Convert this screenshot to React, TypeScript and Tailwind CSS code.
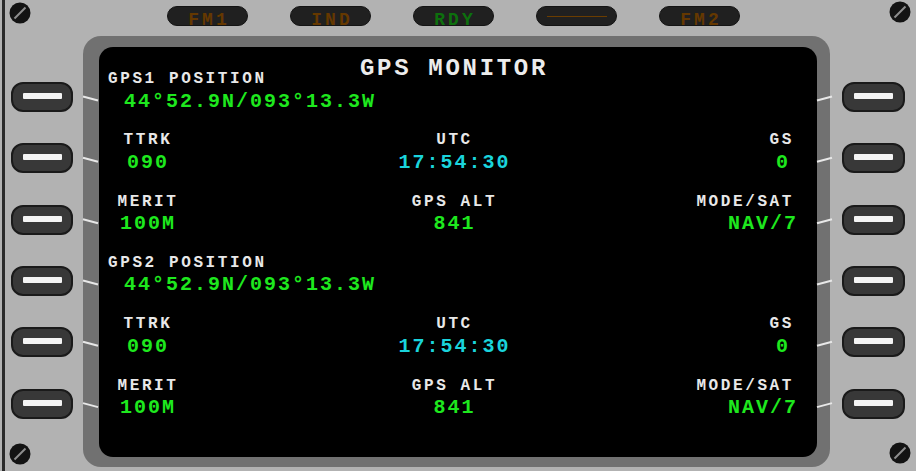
import React from "react";

const mono = "font-['Liberation_Mono',monospace] font-bold";

type Tri = {
  l: [string, string];
  m: [string, string];
  r: [string, string];
  rPad: string;
};

const tri1: Tri = {
  l: ["TTRK", "090"],
  m: ["UTC", "17:54:30"],
  r: ["GS", "0"],
  rPad: "pr-[27px]",
};
const tri2: Tri = {
  l: ["MERIT", "100M"],
  m: ["GPS ALT", "841"],
  r: ["MODE/SAT", "NAV/7"],
  rPad: "pr-[19px]",
};

const rows: ({ pos: string; value: string } | Tri)[] = [
  { pos: "GPS1 POSITION", value: "44°52.9N/093°13.3W" },
  tri1,
  tri2,
  { pos: "GPS2 POSITION", value: "44°52.9N/093°13.3W" },
  tri1,
  tri2,
];

// button centres, measured from the top of the bezel
const lskY = [0, 1, 2, 3, 4, 5].map((i) => 61 + i * 61.33);

function Screw() {
  return (
    <svg width="22" height="22" viewBox="0 0 22 22" className="shrink-0">
      <circle cx="11" cy="11" r="10.5" fill="#131313" />
      <line x1="5.5" y1="16.5" x2="16.5" y2="5.5" stroke="#8e8e8e" strokeWidth="2" />
    </svg>
  );
}

function Lsk() {
  return (
    <div className="h-[30px] rounded-[12px] border-2 border-[#1a1a1a] bg-[#383838] flex items-center justify-center">
      <div className="w-[39px] h-[6px] bg-[#f4f4f4] rounded-[1px] -mt-[2px]" />
    </div>
  );
}

function Pill({ text, color }: { text?: string; color: string }) {
  return (
    <div className="w-[81px] h-[20px] rounded-full bg-[#202020] border border-[#141414] flex justify-center pt-[4px]">
      {text ? (
        <span className={`${mono} text-[18px] leading-none tracking-[3px] pl-[3px] ${color}`}>
          {text}
        </span>
      ) : (
        <div className="w-[60px] h-px bg-[#6b3d00] mt-[5px]" />
      )}
    </div>
  );
}

export default function App() {
  return (
    <div className="w-[919px] h-[471px] bg-white flex overflow-hidden">
      <div className="w-[916px] h-full bg-[#b2b2b2] pl-[2px] flex">
        <div className="flex-1 flex border-l-[3px] border-[#2a2a2a]">
          {/* left keys */}
          <div className="w-[78px] flex flex-col">
            <div className="ml-[4px] mt-[2px]">
              <Screw />
            </div>
            <div className="ml-[6px] w-[62px] mt-[58px] flex flex-col gap-[31.33px]">
              {lskY.map((_, i) => (
                <Lsk key={i} />
              ))}
            </div>
            <div className="ml-[4px] mt-[24.33px]">
              <Screw />
            </div>
          </div>

          {/* centre: annunciators + display */}
          <div className="w-[747px] flex flex-col">
            <div className="h-[36px] pt-[6px] pl-[84px] flex gap-[42px]">
              <Pill text="FM1" color="text-[#653800]" />
              <Pill text="IND" color="text-[#653800]" />
              <Pill text="RDY" color="text-[#0d700d]" />
              <Pill color="" />
              <Pill text="FM2" color="text-[#653800]" />
            </div>
            <div className="relative h-[431px] rounded-[18px] bg-[#717171] pl-[16px] pr-[13px] pt-[11px] pb-[10px] flex">
              <div className="flex-1 bg-black rounded-[14px] pt-[10px] flex flex-col">
                <div className={`${mono} h-[14px] text-[24px] leading-none tracking-[2.7px] text-[#ececec] text-center pr-[8px]`}>
                  GPS MONITOR
                </div>
                {rows.map((row, i) =>
                  "pos" in row ? (
                    <div key={i} className="h-[61.33px] shrink-0 flex flex-col">
                      <div className={`${mono} h-[16px] text-[16px] leading-none tracking-[2.6px] text-[#e8e8e8] pl-[9px]`}>
                        {row.pos}
                      </div>
                      <div className={`${mono} mt-[4.5px] h-[20px] text-[20px] leading-none tracking-[2px] text-[#1ee81e] pl-[25px]`}>
                        {row.value}
                      </div>
                    </div>
                  ) : (
                    <div key={i} className="h-[61.33px] shrink-0 grid grid-cols-[98px_515px_105px]">
                      <div className="flex flex-col items-center">
                        <div className={`${mono} h-[16px] text-[16px] leading-none tracking-[2.6px] text-[#e8e8e8]`}>
                          {row.l[0]}
                        </div>
                        <div className={`${mono} mt-[4.5px] h-[20px] text-[20px] leading-none tracking-[2px] text-[#1ee81e]`}>
                          {row.l[1]}
                        </div>
                      </div>
                      <div className="flex flex-col items-center">
                        <div className={`${mono} h-[16px] text-[16px] leading-none tracking-[2.6px] text-[#e8e8e8]`}>
                          {row.m[0]}
                        </div>
                        <div
                          className={`${mono} mt-[4.5px] h-[20px] text-[20px] leading-none tracking-[2px] ${
                            row.m[0] === "UTC" ? "text-[#1ad4dc]" : "text-[#1ee81e]"
                          }`}
                        >
                          {row.m[1]}
                        </div>
                      </div>
                      <div className="flex flex-col items-end">
                        <div className={`${mono} h-[16px] text-[16px] leading-none tracking-[2.6px] text-[#e8e8e8] pr-[23px]`}>
                          {row.r[0]}
                        </div>
                        <div className={`${mono} mt-[4.5px] h-[20px] text-[20px] leading-none tracking-[2px] text-[#1ee81e] ${row.rPad}`}>
                          {row.r[1]}
                        </div>
                      </div>
                    </div>
                  )
                )}
              </div>
              {/* key-to-line leader marks */}
              <svg className="absolute left-0 top-0 overflow-visible pointer-events-none" width="747" height="431">
                {lskY.map((y, i) => (
                  <g key={i} stroke="#e8e8e8" strokeWidth="2">
                    <line x1="0" y1={y - 0.5} x2="15" y2={y + 3.5} />
                    <line x1="734" y1={y + 3.5} x2="749" y2={y - 0.5} />
                  </g>
                ))}
              </svg>
            </div>
          </div>

          {/* right keys */}
          <div className="w-[86px] flex flex-col">
            <div className="ml-[59px] mt-[1px]">
              <Screw />
            </div>
            <div className="ml-[12px] w-[63px] mt-[59px] flex flex-col gap-[31.33px]">
              {lskY.map((_, i) => (
                <Lsk key={i} />
              ))}
            </div>
            <div className="ml-[59px] mt-[23.33px]">
              <Screw />
            </div>
          </div>
        </div>
      </div>
    </div>
  );
}
